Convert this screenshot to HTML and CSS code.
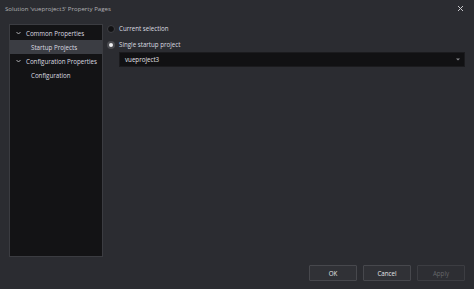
FILE: index.html
```html
<!DOCTYPE html>
<html>
<head>
    <title>Solution 'vueproject3' Property Pages</title>
    <link rel="stylesheet" href="styles.css">
</head>
<body>
    <div class="dialog">
        <div class="titlebar">
            <span class="title">Solution 'vueproject3' Property Pages</span>
            <svg class="close" width="7" height="7" viewBox="0 0 7 7"><path d="M1 1L6 6M6 1L1 6" stroke="#c8c8cc" stroke-width="1"/></svg>
        </div>
        <div class="main">
            <div class="tree">
                <div class="node"><svg class="chev" width="5" height="4" viewBox="0 0 5 4"><path d="M0.5 1L2.5 3L4.5 1" fill="none" stroke="#c0c0c4" stroke-width="0.9"/></svg>Common Properties</div>
                <div class="node child selected">Startup Projects</div>
                <div class="node"><svg class="chev" width="5" height="4" viewBox="0 0 5 4"><path d="M0.5 1L2.5 3L4.5 1" fill="none" stroke="#c0c0c4" stroke-width="0.9"/></svg>Configuration Properties</div>
                <div class="node child">Configuration</div>
            </div>
            <div class="content">
                <label class="radio"><span class="dot"></span>Current selection</label>
                <label class="radio"><span class="dot checked"></span>Single startup project</label>
                <div class="combo">
                    <span>vueproject3</span>
                    <svg width="4" height="3" viewBox="0 0 4 3"><path d="M0 0.5L2 2.5L4 0.5Z" fill="#8a8a8e"/></svg>
                </div>
            </div>
        </div>
        <div class="footer">
            <button>OK</button>
            <button>Cancel</button>
            <button class="disabled">Apply</button>
        </div>
    </div>
</body>
</html>
```

FILE: styles.css
```css
body {
    margin: 0;
    background-color: #2b2c31;
    font-family: "Open Sans", "Liberation Sans", sans-serif;
    color: #e4e4e6;
}
.dialog {
    width: 474px;
    height: 289px;
    display: flex;
    flex-direction: column;
}
.titlebar {
    height: 16px;
    display: flex;
    align-items: center;
    justify-content: space-between;
    padding: 0 10px 0 5px;
}
.title {
    font-size: 6.1px;
    color: #b0b0b4;
}
.main {
    display: flex;
    padding: 8px 0 0 9px;
    height: 232px;
}
.tree {
    width: 92px;
    height: 230px;
    background-color: #131315;
    border: 1px solid #3b3c41;
    padding-top: 1px;
}
.node {
    height: 14px;
    font-size: 6.2px;
    padding-left: 6px;
    display: flex;
    align-items: center;
    color: #dcdce0;
}
.node.child {
    padding-left: 21px;
}
.node.selected {
    background-color: #3b3d43;
}
.chev {
    margin-right: 5px;
}
.content {
    flex: 1;
    padding: 0 9px 0 4px;
}
.radio {
    display: flex;
    align-items: center;
    font-size: 6.2px;
    height: 9px;
    margin-bottom: 7px;
    color: #dcdce0;
}
.dot {
    width: 6px;
    height: 6px;
    border-radius: 50%;
    background-color: #121214;
    border: 1px solid #3e3f44;
    margin-right: 4px;
}
.dot.checked {
    width: 4px;
    height: 4px;
    background-color: #f0f0f2;
    border: 2px solid #4a4b50;
}
.combo {
    margin-left: 12px;
    margin-top: -4px;
    height: 13px;
    background-color: #111113;
    border: 1px solid #1b1b1e;
    display: flex;
    align-items: center;
    justify-content: space-between;
    padding: 0 4px 0 5px;
    font-size: 6.2px;
}
.footer {
    display: flex;
    justify-content: flex-end;
    gap: 6px;
    padding: 9px 9px 0 0;
}
button {
    width: 48px;
    height: 16px;
    background-color: #303136;
    border: 1px solid #47484d;
    border-radius: 1px;
    color: #e4e4e6;
    font-family: "Open Sans", "Liberation Sans", sans-serif;
    font-size: 6.2px;
    padding: 0;
}
button.disabled {
    color: #66676b;
    border-color: #3c3d42;
    background-color: #2d2e33;
}
```
